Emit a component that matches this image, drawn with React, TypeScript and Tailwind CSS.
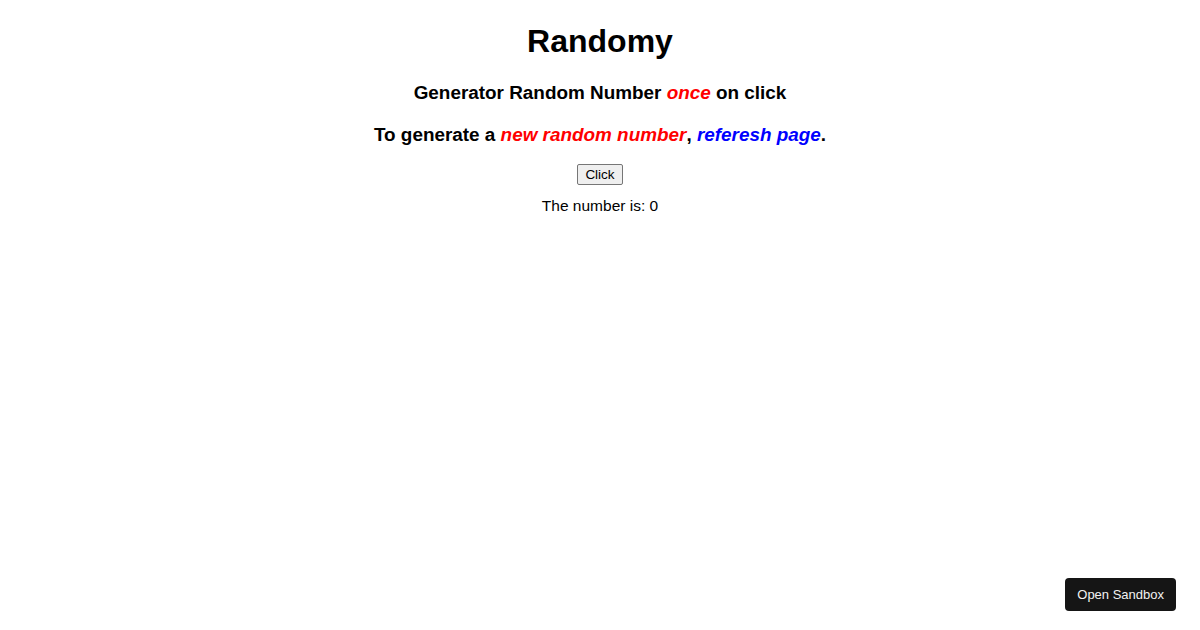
export default function App() {
  return (
    <div className="min-h-[630px] bg-white font-['Liberation_Sans',Arial,sans-serif] text-black text-center">
      <div className="pt-[23px]">
        <h1 className="text-[32px] font-bold leading-[37px]">Randomy</h1>
        <h3 className="mt-[22px] text-[18.9px] font-bold leading-[22px]">
          Generator Random Number <em className="text-[#ff0000]">once</em> on click
        </h3>
        <h3 className="mt-[20px] text-[18.9px] font-bold leading-[22px]">
          To generate a <em className="text-[#ff0000]">new random number</em>,{" "}
          <em className="text-[#0000ff]">referesh page</em>.
        </h3>
        <button className="mt-[18px] h-[21px] px-[7px] text-[13.5px] leading-none bg-[#efefef] border border-[#767676] rounded-[2px]">
          Click
        </button>
        <p className="mt-[11px] text-[15.5px] leading-[18px]">The number is: 0</p>
      </div>
      <button className="fixed right-[24px] bottom-[19px] h-[33px] px-[12px] rounded-[4px] bg-[#151515] text-[#f2f2f2] text-[13px] font-['Liberation_Sans',Arial,sans-serif]">
        Open Sandbox
      </button>
    </div>
  )
}
